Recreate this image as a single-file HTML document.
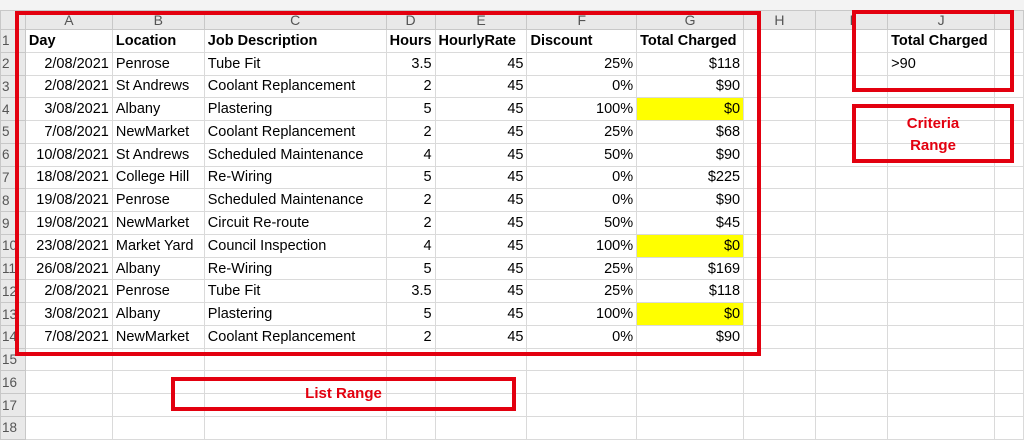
<!DOCTYPE html>
<html><head><meta charset="utf-8"><style>
body{margin:0;width:1024px;height:440px;overflow:hidden;background:#fff;font-family:"Liberation Sans",Arial,sans-serif;position:relative}
.top{position:absolute;left:0;top:0;width:1024px;height:10px;background:#f3f3f3;border-bottom:1px solid #d4d4d4}
table{position:absolute;left:0;top:10px;border-collapse:collapse;table-layout:fixed}
td{border:1px solid #dadada;height:22.77px;padding:0 3px;font-size:14.5px;color:#000;white-space:nowrap;overflow:hidden;box-sizing:border-box}
tr.h td{height:19px;background:#e9e9e9;color:#555;text-align:center;font-size:14px;border-color:#c8c8c8}
td.n{background:#e9e9e9;color:#555;text-align:left;padding:0 0 0 1px;font-size:13.5px;border-color:#c8c8c8}
td.r{text-align:right}
td.b{font-weight:bold}
td.y{background:#ffff00}
.box{position:absolute;border:4px solid #e3000f;box-sizing:border-box}
.lbl{position:absolute;color:#e3000f;font-weight:bold;font-size:15px;text-align:center}
</style></head><body>
<div class="top"></div>
<table>
<colgroup><col style="width:25px"><col style="width:87px"><col style="width:92px"><col style="width:182px"><col style="width:48px"><col style="width:92px"><col style="width:110px"><col style="width:107px"><col style="width:72px"><col style="width:73px"><col style="width:107px"><col style="width:29px"></colgroup>
<tr class="h"><td></td><td>A</td><td>B</td><td>C</td><td>D</td><td>E</td><td>F</td><td>G</td><td>H</td><td>I</td><td>J</td><td></td></tr>
<tr><td class="n">1</td><td class="b">Day</td><td class="b">Location</td><td class="b">Job Description</td><td class="b">Hours</td><td class="b">HourlyRate</td><td class="b">Discount</td><td class="b">Total Charged</td><td></td><td></td><td class="b">Total Charged</td><td></td></tr>
<tr><td class="n">2</td><td class="r">2/08/2021</td><td>Penrose</td><td>Tube Fit</td><td class="r">3.5</td><td class="r">45</td><td class="r">25%</td><td class="r">$118</td><td></td><td></td><td>&gt;90</td><td></td></tr>
<tr><td class="n">3</td><td class="r">2/08/2021</td><td>St Andrews</td><td>Coolant Replancement</td><td class="r">2</td><td class="r">45</td><td class="r">0%</td><td class="r">$90</td><td></td><td></td><td></td><td></td></tr>
<tr><td class="n">4</td><td class="r">3/08/2021</td><td>Albany</td><td>Plastering</td><td class="r">5</td><td class="r">45</td><td class="r">100%</td><td class="r y">$0</td><td></td><td></td><td></td><td></td></tr>
<tr><td class="n">5</td><td class="r">7/08/2021</td><td>NewMarket</td><td>Coolant Replancement</td><td class="r">2</td><td class="r">45</td><td class="r">25%</td><td class="r">$68</td><td></td><td></td><td></td><td></td></tr>
<tr><td class="n">6</td><td class="r">10/08/2021</td><td>St Andrews</td><td>Scheduled Maintenance</td><td class="r">4</td><td class="r">45</td><td class="r">50%</td><td class="r">$90</td><td></td><td></td><td></td><td></td></tr>
<tr><td class="n">7</td><td class="r">18/08/2021</td><td>College Hill</td><td>Re-Wiring</td><td class="r">5</td><td class="r">45</td><td class="r">0%</td><td class="r">$225</td><td></td><td></td><td></td><td></td></tr>
<tr><td class="n">8</td><td class="r">19/08/2021</td><td>Penrose</td><td>Scheduled Maintenance</td><td class="r">2</td><td class="r">45</td><td class="r">0%</td><td class="r">$90</td><td></td><td></td><td></td><td></td></tr>
<tr><td class="n">9</td><td class="r">19/08/2021</td><td>NewMarket</td><td>Circuit Re-route</td><td class="r">2</td><td class="r">45</td><td class="r">50%</td><td class="r">$45</td><td></td><td></td><td></td><td></td></tr>
<tr><td class="n">10</td><td class="r">23/08/2021</td><td>Market Yard</td><td>Council Inspection</td><td class="r">4</td><td class="r">45</td><td class="r">100%</td><td class="r y">$0</td><td></td><td></td><td></td><td></td></tr>
<tr><td class="n">11</td><td class="r">26/08/2021</td><td>Albany</td><td>Re-Wiring</td><td class="r">5</td><td class="r">45</td><td class="r">25%</td><td class="r">$169</td><td></td><td></td><td></td><td></td></tr>
<tr><td class="n">12</td><td class="r">2/08/2021</td><td>Penrose</td><td>Tube Fit</td><td class="r">3.5</td><td class="r">45</td><td class="r">25%</td><td class="r">$118</td><td></td><td></td><td></td><td></td></tr>
<tr><td class="n">13</td><td class="r">3/08/2021</td><td>Albany</td><td>Plastering</td><td class="r">5</td><td class="r">45</td><td class="r">100%</td><td class="r y">$0</td><td></td><td></td><td></td><td></td></tr>
<tr><td class="n">14</td><td class="r">7/08/2021</td><td>NewMarket</td><td>Coolant Replancement</td><td class="r">2</td><td class="r">45</td><td class="r">0%</td><td class="r">$90</td><td></td><td></td><td></td><td></td></tr>
<tr><td class="n">15</td><td></td><td></td><td></td><td></td><td></td><td></td><td></td><td></td><td></td><td></td><td></td></tr>
<tr><td class="n">16</td><td></td><td></td><td></td><td></td><td></td><td></td><td></td><td></td><td></td><td></td><td></td></tr>
<tr><td class="n">17</td><td></td><td></td><td></td><td></td><td></td><td></td><td></td><td></td><td></td><td></td><td></td></tr>
<tr><td class="n">18</td><td></td><td></td><td></td><td></td><td></td><td></td><td></td><td></td><td></td><td></td><td></td></tr>
</table>
<div class="box" style="left:15px;top:11px;width:746px;height:345px"></div>
<div class="box" style="left:852px;top:10px;width:162px;height:82px"></div>
<div class="box" style="left:852px;top:104px;width:162px;height:59px"></div>
<div class="lbl" style="left:852px;top:113px;width:162px;line-height:22px">Criteria<br>Range</div>
<div class="box" style="left:171px;top:377px;width:345px;height:34px"></div>
<div class="lbl" style="left:171px;top:385px;width:345px">List Range</div>
</body></html>
